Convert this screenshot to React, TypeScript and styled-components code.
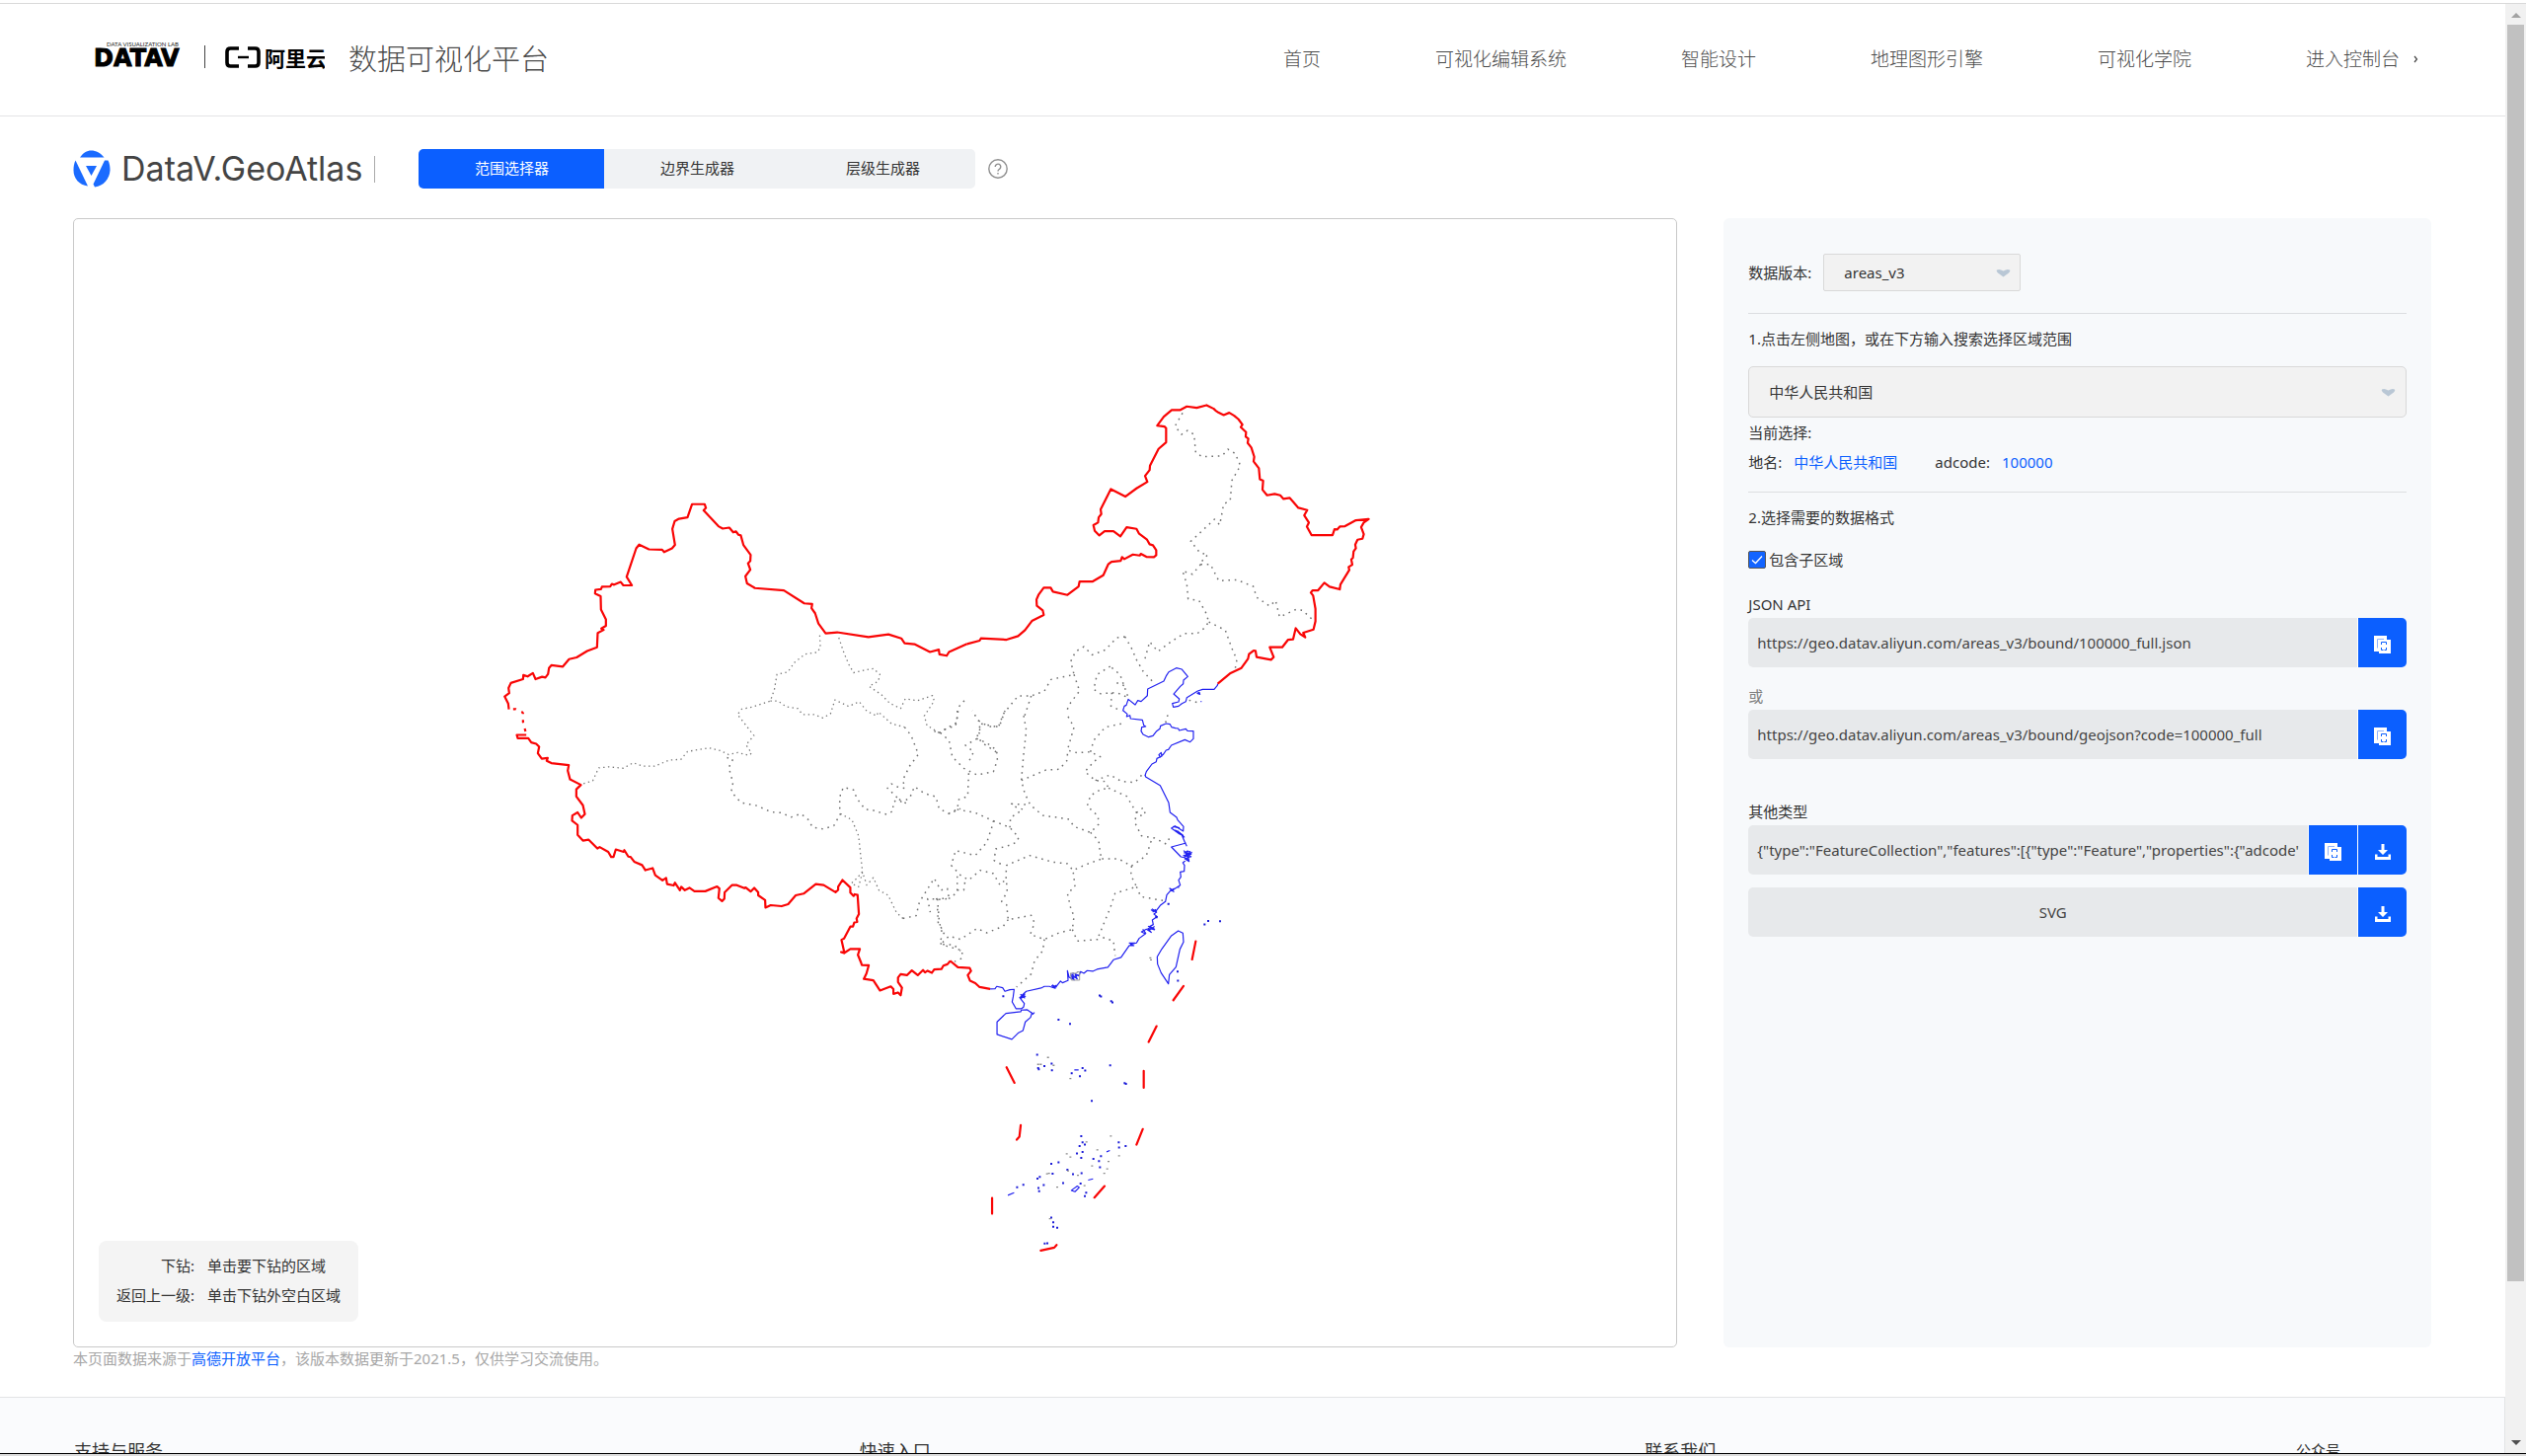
import React from 'react';
import styled, { createGlobalStyle } from 'styled-components';

const BLUE = '#0b5fff';
const FONT = '"Noto Sans", "Noto Sans CJK SC", sans-serif';

const Global = createGlobalStyle`
  *, *::before, *::after { box-sizing: border-box; }
  body { margin: 0; background: #fff; color: #333; font: 15px/30px ${FONT}; }
  button, input, select { font: inherit; color: inherit; }
  a { color: inherit; text-decoration: none; }
`;

const Screen = styled.div`
  display: flex;
  flex-direction: column;
  height: 100vh;
  padding-top: 3px;
  overflow: hidden;
`;

const Viewport = styled.div`
  display: flex;
  flex: 1;
  min-height: 0;
  border-top: 1px solid #d9d9d9;
`;

const Page = styled.div`
  flex: 1;
  min-width: 0;
  overflow: hidden;
`;

const BottomEdge = styled.div`
  height: 3px;
  flex: none;
  border-top: 1px solid #000;
  background: #dcdcdc;
`;

const Scrollbar = styled.div`
  display: flex;
  flex-direction: column;
  align-items: center;
  width: 21px;
  flex: none;
  background: #f1f1f1;
`;

const Arrow = styled.span<{ $down?: boolean }>`
  width: 0;
  height: 0;
  margin: ${(p) => (p.$down ? 'auto 0 8px' : '9px 0 7px')};
  border: 5px solid transparent;
  border-top: ${(p) => (p.$down ? '5px solid #505050' : '0')};
  border-bottom: ${(p) => (p.$down ? '0' : '5px solid #a3a3a3')};
`;

const Thumb = styled.div`
  width: 17px;
  height: calc(100% - 195px);
  background: #c1c1c1;
`;

const Header = styled.header`
  display: flex;
  align-items: center;
  justify-content: space-between;
  height: 114px;
  padding: 0 86px 2px 94px;
  border-bottom: 1px solid #e3e4e6;
`;

const Brand = styled.a`
  display: flex;
  align-items: center;
  color: #000;
`;

const BrandTitle = styled.span`
  margin-left: 24px;
  font-size: 29px;
  font-weight: 300;
  line-height: 36px;
  color: #4c4c4c;
`;

const Nav = styled.nav`
  display: flex;
  gap: 116px;
  font-size: 19px;
  font-weight: 300;
  color: #4a4a4a;
`;

const NavLink = styled.a`
  display: flex;
  align-items: center;
  gap: 13px;
`;

const Main = styled.main`
  padding: 33px 75px 28px 74px;
`;

const TitleBar = styled.div`
  display: flex;
  align-items: center;
  height: 40px;
  margin-bottom: 30px;
`;

const Product = styled.h1`
  display: flex;
  align-items: center;
  gap: 11px;
  margin: 0;
  font: 400 34px/38px Inter, sans-serif;
  color: #444;
`;

const Divider = styled.span`
  width: 1px;
  height: 27px;
  margin-left: 12px;
  background: #aaa;
`;

const Tabs = styled.div`
  display: flex;
  margin: 0 13px 0 44px;
  border-radius: 5px;
  overflow: hidden;
`;

const Tab = styled.button<{ $on?: boolean }>`
  width: 188px;
  height: 40px;
  padding: 0 0 2px;
  border: 0;
  background: ${(p) => (p.$on ? BLUE : '#f0f2f4')};
  color: ${(p) => (p.$on ? '#fff' : '#333')};
`;

const HelpButton = styled.button`
  display: flex;
  padding: 0;
  border: 0;
  background: none;
`;

const Columns = styled.div`
  display: grid;
  grid-template-columns: 68% 30%;
  justify-content: space-between;
`;

const MapPanel = styled.section`
  position: relative;
  display: flex;
  min-height: 1144px;
  border: 1px solid #c9c9c9;
  border-radius: 5px;
`;

const MapDrawing = styled.svg`
  width: 100%;
  height: 100%;
  fill: none;
  stroke-linejoin: round;
  path { vector-effect: non-scaling-stroke; }
`;

const Hint = styled.dl`
  position: absolute;
  left: 25px;
  bottom: 25px;
  display: grid;
  grid-template-columns: auto auto;
  column-gap: 13px;
  margin: 0;
  padding: 10px 18px 12px;
  border-radius: 8px;
  background: #f4f4f4;
  dt { text-align: right; }
  dd { margin: 0; }
`;

const Side = styled.aside`
  padding: 36px 25px;
  border-radius: 6px;
  background: #f7f9fb;
`;

const Inline = styled.div`
  display: flex;
  align-items: center;
  gap: 12px;
`;

const SelectBox = styled.div<{ $wide?: boolean }>`
  display: grid;
  align-items: center;
  width: ${(p) => (p.$wide ? '100%' : '200px')};
  > * { grid-area: 1 / 1; }
  svg {
    justify-self: end;
    margin-right: ${(p) => (p.$wide ? '11px' : '10px')};
    pointer-events: none;
  }
`;

const Select = styled.select<{ $tall?: boolean }>`
  appearance: none;
  width: 100%;
  height: ${(p) => (p.$tall ? '52px' : '38px')};
  padding: 0 20px;
  border: 1px solid #d9d9d9;
  border-radius: ${(p) => (p.$tall ? '5px' : '2px')};
  background: #f2f2f2;
`;

const Rule = styled.hr`
  height: 1px;
  margin: 22px 0 10px;
  border: 0;
  background: #dcdee1;
`;

const ShortRule = styled(Rule)`
  margin-top: 15px;
`;

const StepTitle = styled.label`
  display: block;
  margin-bottom: 13px;
`;

const Line = styled.div`
  display: flex;
  gap: 12px;
`;

const Value = styled.span`
  margin-right: 26px;
  color: ${BLUE};
`;

const Check = styled.label`
  display: flex;
  align-items: center;
  gap: 3px;
  margin-bottom: 16px;
`;

const CheckMark = styled.span`
  display: grid;
  width: 18px;
  height: 18px;
  > * { grid-area: 1 / 1; }
  svg { pointer-events: none; }
`;

const CheckInput = styled.input`
  appearance: none;
  margin: 0;
  width: 18px;
  height: 18px;
  border: 1px solid #555;
  border-radius: 2px;
  &:checked { background: #1264ff; }
`;

const FieldLabel = styled.label<{ $gap?: number; $muted?: boolean }>`
  display: block;
  margin-top: ${(p) => p.$gap || 0}px;
  line-height: 28px;
  color: ${(p) => (p.$muted ? '#808080' : 'inherit')};
`;

const FieldRow = styled.div<{ $gap?: number }>`
  display: flex;
  gap: 1px;
  margin-top: ${(p) => p.$gap || 0}px;
  border-radius: 5px;
  overflow: hidden;
  background: #fff;
`;

const Field = styled.input<{ $center?: boolean }>`
  flex: 1;
  min-width: 0;
  height: 50px;
  padding: 0 9px;
  border: 0;
  background: #e7e9eb;
  color: #444;
  text-align: ${(p) => (p.$center ? 'center' : 'left')};
`;

const IconButton = styled.button`
  display: flex;
  align-items: center;
  justify-content: center;
  width: 49px;
  height: 50px;
  padding: 4px 0 0;
  border: 0;
  background: ${BLUE};
`;

const Source = styled.p`
  margin: 0;
  line-height: 22px;
  color: #a6a6a6;
  a { color: ${BLUE}; }
`;

const Footer = styled.footer`
  display: grid;
  grid-template-columns: repeat(3, 1fr);
  padding: 39px 75px;
  border: 1px solid #e3e4e6;
  border-left: 0;
  background: #fafbfd;
`;

const FooterColumn = styled.div`
  display: flex;
  justify-content: space-between;
  padding-right: 91px;
`;

const FooterTitle = styled.h2`
  margin: 0;
  font: 400 18px/30px ${FONT};
`;

const FooterNote = styled.p`
  margin: 0;
  line-height: 28px;
`;

const DatavLogo = () => (
  <svg width="235" height="48" viewBox="0 0 235 48">
    <text x="14" y="11" fontSize="6" fontFamily="Lato, sans-serif" fill="#222">DATA VISUALIZATION LAB</text>
    <text x="1" y="31" fontSize="24" fontWeight="700" fontFamily="DejaVu Sans, sans-serif" stroke="#000" strokeWidth="1">DATAV</text>
    <path d="M113.500 10V33" stroke="#444" />
    <path d="M148 13h-8.500c-2.500 0-3.500 1-3.500 3.500v11c0 2.500 1 3.500 3.500 3.500h8.500M157 13h7.500c2.500 0 3.500 1 3.500 3.500v11c0 2.500-1 3.500-3.500 3.500H157" fill="none" stroke="#000" strokeWidth="3.600" />
    <path d="M147 22h11" stroke="#000" strokeWidth="2.400" />
    <text x="174" y="31" fontSize="21" fontWeight="700" fontFamily="Noto Sans CJK SC, sans-serif">阿里云</text>
  </svg>
);

const GeoLogo = () => (
  <svg width="38" height="38" viewBox="0 0 38 38" fill="#1b6bff">
    <path d="M7 7.500C10 3 14 .500 18.500 .500S28 3 31.500 7.500Z" />
    <path d="M2.500 10.500L15 36.500C6 35.500.500 28.500.500 20.500.500 16.500 1 13.500 2.500 10.500Z" />
    <path d="M32 10.500H35.500C37 13.500 37.500 16.500 37.500 20.500 37 29 31 36.500 22 37.500L20.500 34.500Z" />
    <path d="M13 16H24L18.500 26Z" />
  </svg>
);

const Caret = () => (
  <svg width="15" height="9" viewBox="0 0 15 9" fill="#b9c7d5">
    <path d="M1 1.500Q3.500 0 7.500 2.500Q11.500 0 14 1.500Q15 2.500 13 4.500L7.500 8.500L2 4.500Q0 2.500 1 1.500Z" />
  </svg>
);

const CopyIcon = () => (
  <svg width="17" height="18" viewBox="0 0 17 18">
    <path d="M0 0h13v4h4v14H5v-2H0z" fill="#fff" />
    <path d="M3.500 12.500V3.500H10" fill="none" stroke="#8fb4ff" />
    <path d="M7.500 9V6.500h5V9M7.500 12v2.500h2M12.500 12v2.500h-2" fill="none" stroke={BLUE} />
  </svg>
);

const DownloadIcon = () => (
  <svg width="16" height="16" viewBox="0 0 16 16" fill="#fff">
    <path d="M6.500 0h3v6H13l-5 5-5-5h3.500z" />
    <path d="M0 10.500h2.500V13h11v-2.500H16V16H0z" />
  </svg>
);

const B_NORTHWEST = 'M107 693L105 676 94 655 108 645 106 630 113 615 150 604 151 592 164 596 180 586 188 604 208 597 218 599 226 589 229 571 236 563 271 567 290 545 313 540 345 521 375 510 377 468 395 459 388 455 402 447 402 428 387 399 386 360 369 352 370 341 387 339 390 332 415 331 420 324 427 326 447 318 455 328 481 328 465 303 494 219 503 208 533 222 573 223 579 230 603 219 612 209 604 162 611 139 624 132 650 128 664 89 702 89 706 100 699 107 744 154 757 161 777 158 789 172 797 169 805 179 812 181 820 209 842 238 841 256 834 263 841 282 826 301 831 322 855 336 943 343 1005 381 1029 383 1027 395 1038 410 1048 440 1070 469 1105 466 1200 480 1261 472 1300 484 1310 498 1340 501 1387 524 1414 517 1416 531 1438 535 1445 524 1500 500';
const B_SOUTHWEST = 'M160 768L131 768 134 778 166 778 175 790 190 794 199 803 195 822 207 838 225 836 222 844 236 851 289 857 286 873 293 899 326 915 312 928 312 949 332 975 338 1001 327 1012 316 996 300 1005 299 1020 316 1033 316 1062 332 1079 349 1076 376 1102 383 1098 409 1112 418 1127 425 1127 432 1105 456 1112 458 1107 470 1126 477 1127 488 1141 512 1151 522 1166 544 1160 552 1181 574 1196 585 1189 588 1207 608 1211 612 1203 627 1225 631 1215 642 1225 656 1218 671 1228 704 1228 740 1214 747 1220 744 1248 755 1257 762 1250 763 1231 785 1210 800 1210 823 1219 827 1217 842 1229 853 1218 865 1231 865 1240 886 1254 887 1276 903 1269 936 1272 956 1266 979 1240 1003 1235 1040 1207 1064 1210 1100 1231 1108 1224 1108 1215 1121 1195 1145 1217 1145 1232 1155 1242 1158 1237 1167 1239 1171 1295 1164 1308 1166 1318 1157 1320 1153 1332 1145 1332 1126 1367 1118 1371 1126 1405 1117 1407 1126 1410 1145 1398 1174 1398 1168 1415 1178 1439 1180 1445 1201 1446 1194 1470 1186 1486 1215 1490 1235 1520 1268 1508 1276 1516 1276 1530 1290 1526 1298 1534 1302 1512 1290 1495 1290 1482 1298 1472 1317 1475 1332 1461 1350 1475 1366 1460 1372 1467 1380 1462 1393 1468 1400 1458 1422 1457 1428 1447 1440 1443 1449 1433';
const B_NORTHEAST = 'M0 787L38 777 42 770 120 774 155 763 176 745 197 717 233 699 230 685 212 671 211 652 217 638 233 616 254 616 261 628 305 638 339 612 342 597 382 597 414 578 429 545 439 537 467 534 471 523 478 529 504 515 525 518 528 513 545 522 568 523 575 517 575 502 565 487 555 484 547 470 523 452 515 437 485 432 466 460 445 444 418 444 402 457 388 443 384 426 398 418 400 402 408 392 406 378 437 316 481 339 515 314 548 294 541 276 555 258 556 245 582 194 605 174 605 131 600 126 578 123 598 96 622 76 647 76 668 65 698 69 728 61 750 72 755 77 765 84 780 91 797 84 812 93 825 104 837 120 832 128 848 143 847 157 855 163 853 176 864 190 873 218 871 232 887 253 890 286 900 291 898 318 912 335 935 331 952 335 962 346 981 343 1007 373 1034 380 1025 396 1039 418 1033 430 1047 456 1111 456 1117 438 1125 439 1133 430 1149 429 1182 411 1221 407 1206 418 1198 432 1206 453 1202 467 1187 470 1180 485 1182 496 1175 506 1173 525 1168 530 1171 546 1160 553 1162 562 1135 606 1133 621 1102 613 1086 601 1067 624 1050 624 1045 631 1052 640 1059 680 1059 718 1053 743 1022 753 1028 767 1013 757 999 739 991 773 976 774 958 797 920 797 932 827 924 835 880 827 877 808 871 807 857 818 854 832 834 860 799 877 762 908';
const B_SOUTH = 'M488 760L512 780 548 782 552 791 542 804 549 821 565 828 578 840 610 846';
const DASHES = 'M695 161L684 216M658 297L627 340M576 419L552 467M537 555V606M534 732L515 779M418 905L387 940M272 1084L265 1092 224 1101M76 941V989M163 720L159 755 151 764M120 544L144 591';

const COAST_NORTH = 'M762 908L761 913 751 925 716 925 701 930 668 950 665 962 653 968 643 976 627 979 624 968 643 963 645 954 628 939 648 916 657 908 658 897 671 886 653 864 636 860 613 872 606 883 598 900 549 924 548 944 529 962 519 959 511 972 490 955 484 973 478 976 474 989 487 1000 485 1008 495 1004 497 1014 533 1018 537 1034 543 1038 531 1040 529 1052 535 1062 552 1070 565 1066 575 1053 586 1045 588 1036 605 1029 617 1031 622 1040 633 1043 642 1044 645 1050 665 1045 670 1051 688 1052 688 1075 678 1085 662 1078 621 1095 612 1108 605 1110 597 1122 587 1131 583 1124 590 1117 592 1128 577 1135 575 1145 562 1152 545 1175 541 1187M700 937L708 940 706 934ZM710 962h3';
const COAST_EAST = 'M1081 195L1083 201 1127 227 1153 280 1157 309 1177 324 1180 332 1198 352 1197 366 1172 350 1161 357 1185 374 1197 380 1180 366 1200 384 1193 378 1202 400 1208 412M1206 402L1161 414 1190 444 1205 447M1212 425L1200 432 1222 435 1198 440 1218 444 1202 450 1215 458 1205 430 1218 428 1208 452 1196 462 1201 470 1200 488 1188 490 1190 505 1183 515 1188 530 1165 545 1156 540 1168 550 1160 545 1147 560 1143 580 1127 592 1115 608 1100 606 1116 612 1108 618 1118 626 1103 636 1106 650 1095 656 1110 664 1090 662 1100 674 1085 664 1070 672 1082 678 1063 692 1055 706 1037 710 1047 714 1033 714 1008 750 985 757 968 780 935 786 922 792 905 790 895 798 885 793 880 806 868 800 873 812 856 806 866 818 850 810 845 790 847 820 830 827 824 822 810 840 800 834 808 844 790 838 775 838 765 843 720 853 707 865 717 868 703 874 714 862 700 872 714 890 712 900 705 906 689 906 677 885 680 870 683 847 670 848 655 853 648 842 630 838 625 845 610 846';
/* Harbours and offshore islets packed against the shore. */
const COAST_DETAIL = 'M1198 425L1222 445M1200 445L1224 430M1204 436h18M1208 455l8 -6M1158 548l12 -8M1180 537h5M1102 602l14 10M1104 612l10 -8M1112 626h6M1090 655l20 12M1092 668l18 -12M1074 664l10 14M1032 706h20M856 800l20 16M858 814l20 -12M862 796v20M796 836l16 4M800 842l12 -8M702 862l14 12M704 874l12 -14M1172 362l24 16M1166 352l20 4M1150 587h4';
const ISLANDS = 'M642 129L656 136 658 163 647 185 635 239 615 262 612 290 590 257 579 230 578 208 592 184 620 145ZM118 380L163 375 165 370 183 369 197 379 193 392 177 406 170 432 155 440 136 459 91 444 91 406ZM194 376L200 382 205 377M317 918L335 905 341 909 328 922ZM124 933L143 925M326 552H339M424 801L434 797M368 887L383 883';

const BLUE_ISLETS = [733,99,722,110,769,100,640,253,641,281,403,326,407,329,438,343,442,347,278,399,313,412,110,328,612,47,576,88,213,506,216,546,235,540,257,533,258,553,218,550,351,546,359,554,318,562,343,571,435,538,479,592,483,594,379,646,347,753,351,772,342,783,358,779,351,801,334,806,347,819,461,772,462,788,482,783,407,814,401,829,404,848,384,822,278,833,256,837,260,867,221,877,214,882,171,901,152,909,233,902,217,911,219,921,292,896,305,855,322,869,348,866,345,897,362,925,358,936,256,1001,262,1015,262,1029,274,1032,236,1080,244,1079];
const GREY_ISLETS = [557,211,559,217,246,514,224,535,263,538,216,535,314,578,437,753,462,813,396,795,363,771,303,807,314,817,430,830,426,853,417,866,380,844,307,859,249,866,243,868,274,908,337,872,357,904,252,1004];

const toDots = (list: number[]) => {
  let d = '';
  for (let i = 0; i < list.length; i += 2) d += `M${list[i] - 3} ${list[i + 1]}h6`;
  return d;
};

const P_WEST = 'M1052 475L1054 510 1045 525 1008 530 975 555 955 583 922 590 914 635 902 668 850 685 815 692 802 708 820 730 852 770 828 797 845 822 836 828 803 820 775 826 752 815 715 806 650 817 630 840 595 842 550 860 515 860 485 850 455 866 410 862 380 865 362 903 328 913M902 668L925 668 950 685 985 690 1000 708 1035 708 1062 718 1085 705 1098 665 1140 684 1172 670 1195 698 1225 712 1230 700 1270 735 1310 745M1110 482L1125 525 1140 560 1155 585 1185 578 1215 573 1235 590 1230 610 1202 625 1240 650 1265 675 1298 690 1312 662 1350 667 1395 652 1400 668 1370 712 1378 740 1415 762M1115 1000L1150 1018 1170 1065 1175 1110 1182 1170 1165 1190 1148 1205 1170 1215 1182 1172 1195 1210 1215 1188 1232 1225 1260 1240 1285 1290 1305 1308';
const P_WEST_BOLD = 'M770 835L788 840 775 865 782 885 788 910 783 935 812 967 860 976 905 995 935 997 965 1010 995 1000 1018 1018 1030 1040 1062 1045 1095 1035 1115 1000 1112 975 1115 940 1125 922 1155 930 1165 955 1190 987 1215 990 1255 1002 1275 992 1275 968 1290 955 1305 965 1318 970M1310 745L1330 770 1352 825 1325 860 1305 900 1310 925 1285 920 1270 912 1258 925 1280 945 1300 965 1325 955 1340 920 1370 940 1405 950 1415 985 1445 1000 1480 985M1415 762L1440 748 1465 742 1475 685 1500 658M1305 1308L1345 1300 1355 1260 1400 1190 1420 1225 1440 1220 1445 1250 1415 1252 1380 1250 1388 1290M1410 1280L1412 1320 1430 1350 1415 1380 1440 1390 1485 1402 1485 1425 1462 1435';
const P_CENTRE = 'M440 62L460 68 485 90 495 140 530 175 570 195 620 185 632 150 630 120 600 98 570 85 580 60 575 30 555 0M510 0L510 35 475 55 455 68M575 30L605 48 638 48 655 0M570 85L535 105 560 125 545 155M545 190L542 260 515 270 510 300 485 312M510 300L565 310 620 335 615 355 600 400 565 440 505 425 492 470 520 500 545 515 580 485 620 495 640 530 655 515M620 335L670 355 697 385 690 400 660 412 627 420 622 455 650 470M670 355L672 325 710 300 680 290 675 283 732 286M712 15L720 60 712 130 705 212 715 250 732 286 770 318 850 330 865 352 915 370 940 345 938 320 905 290 915 258 945 240 970 235 960 215 930 212 898 185 925 155 945 140 915 125 875 128 845 120 865 50 840 5M705 212L780 180 820 178 845 150 845 120M915 125L925 90 960 50 1015 38M930 212L975 195 1010 215 1050 218 1078 188M970 235L1025 260 1055 310 1050 340 1070 380 1110 387 1145 405 1155 388M1055 310L1075 295 1082 315 1062 320M915 370L940 395 945 435 950 450 900 468 862 485 845 465 800 460 730 440 660 470 658 500 662 550 645 580 660 590 665 635 735 622 745 645 732 680 775 695 820 675 860 665 865 625 855 600 845 555 868 535 862 485M950 450L1000 450 1040 472 1085 440 1100 395M1040 472L1038 500 1055 535 990 555 975 600 940 685 985 700 990 745M1055 535L1068 565 1140 578M860 665L875 700 940 695 940 685M665 635L650 655 600 675 570 662 520 695 485 685 460 710 500 712 520 730M775 695L770 730 745 760 735 800 690 840M450 572L455 640 465 680M445 572L490 570 510 550 510 500M510 545L530 545 535 510';
const P_NORTH = 'M655 85L632 125 652 150 670 138 690 150 695 205 715 218 775 215 793 195 815 208 831 245 805 290 800 350 780 362 768 425 752 408 680 475 708 510 732 515 710 540M710 545L740 545 765 595 820 592 870 612 880 645 920 672 938 655 950 705 1000 682 1020 685 1052 715M710 545L685 575 655 565 668 605 672 650 705 655 725 690 735 720 720 740 700 755 660 755 620 780 580 810 555 780 540 835M735 720L785 745 805 800 820 835 815 862M480 765L455 768 420 805 380 820 355 795 330 810 315 840 325 880 255 895 235 930 195 945 155 945 110 1000 95 1040 45 1030 30 1070 50 1090 95 1120M480 765L500 800 515 835 535 870 570 908M325 880L342 930 315 965 300 995M435 855L395 880 385 925 405 938 455 935 490 950 465 880 435 855M440 935L437 975 470 992M455 905L480 915M195 945L175 1005M610 1003L603 1028M675 958L700 965';

/* Each tile of the outline is digitised on its own local grid. */
const WEST = 'translate(480 480) scale(.33333 .34439)';
const NORTH = 'translate(980 390) scale(.33333)';
const CENTRE = 'translate(800 720) scale(.33333)';
const SOUTH = 'translate(980 900) scale(.33333)';

const ChinaMap = () => (
  <MapDrawing viewBox="0 0 1623 1142" role="img" aria-label="中华人民共和国">
    <g transform="translate(-75 -222)">
      <path transform={WEST} d={P_WEST} stroke="#787878" strokeWidth="1.300" strokeDasharray="1.400 3.400" />
      <g stroke="#707070" strokeWidth="1.500" strokeDasharray="1.600 4.800">
        <path transform={WEST} d={P_WEST_BOLD} />
        <path transform={CENTRE} d={P_CENTRE} />
        <path transform={NORTH} d={P_NORTH} />
      </g>
      <g stroke="#2222f0" strokeWidth="1.200">
        <path transform={NORTH} d={COAST_NORTH} />
        <path transform={CENTRE} d={COAST_EAST} />
        <path transform={CENTRE} d={COAST_DETAIL} />
        <path transform={SOUTH} d={ISLANDS} />
      </g>
      <path transform={SOUTH} d={toDots(BLUE_ISLETS)} stroke="#1c1cd8" strokeWidth="2" />
      <path transform={SOUTH} d={toDots(GREY_ISLETS)} stroke="#8a8a8a" strokeWidth="1.300" />
      <path transform={SOUTH} d="M314 258h20v-4h8v25h-25z" stroke="#999" />
      <g stroke="#f90505" strokeWidth="2.200">
        <path transform={WEST} d={B_NORTHWEST} />
        <path transform={WEST} d={B_SOUTHWEST} />
        <path transform={WEST} d="M120 692L128 692 146 700 150 704 150 730 156 752 160 768" strokeDasharray="3 6" />
        <path transform={NORTH} d={B_NORTHEAST} />
        <path transform={CENTRE} d={B_SOUTH} />
        <path transform={SOUTH} d={DASHES} strokeLinecap="round" />
      </g>
    </g>
  </MapDrawing>
);

const NAV = ['首页', '可视化编辑系统', '智能设计', '地理图形引擎', '可视化学院'];

export default function App() {
  return (
    <Screen>
      <Global />
      <Viewport>
        <Page>
          <Header>
            <Brand href="#">
              <DatavLogo />
              <BrandTitle>数据可视化平台</BrandTitle>
            </Brand>
            <Nav>
              {NAV.map((item) => (
                <NavLink href="#" key={item}>{item}</NavLink>
              ))}
              <NavLink href="#">
                进入控制台
                <svg width="8" height="10" viewBox="0 0 8 10" fill="none" stroke="#444" strokeWidth="1.200">
                  <path d="M2 2L4.500 5L2 8" />
                </svg>
              </NavLink>
            </Nav>
          </Header>
          <Main>
            <TitleBar>
              <Product><GeoLogo />DataV.GeoAtlas</Product>
              <Divider />
              <Tabs>
                <Tab $on>范围选择器</Tab>
                <Tab>边界生成器</Tab>
                <Tab>层级生成器</Tab>
              </Tabs>
              <HelpButton aria-label="帮助">
                <svg width="20" height="20" viewBox="0 0 20 20" fill="none" stroke="#8f8f8f" strokeWidth="1.400">
                  <circle cx="10" cy="10" r="9.200" />
                  <path d="M7.200 8a2.800 2.800 0 1 1 4.300 2.300c-1 .700-1.500 1.100-1.500 2.200M10 14v1.600" />
                </svg>
              </HelpButton>
            </TitleBar>
            <Columns>
              <MapPanel>
                <ChinaMap />
                <Hint>
                  <dt>下钻:</dt>
                  <dd>单击要下钻的区域</dd>
                  <dt>返回上一级:</dt>
                  <dd>单击下钻外空白区域</dd>
                </Hint>
              </MapPanel>
              <Side>
                <Inline>
                  <label htmlFor="version">数据版本:</label>
                  <SelectBox>
                    <Select id="version"><option>areas_v3</option></Select>
                    <Caret />
                  </SelectBox>
                </Inline>
                <Rule />
                <StepTitle htmlFor="area">1.点击左侧地图，或在下方输入搜索选择区域范围</StepTitle>
                <SelectBox $wide>
                  <Select id="area" $tall><option>中华人民共和国</option></Select>
                  <Caret />
                </SelectBox>
                <Line>当前选择:</Line>
                <Line>
                  地名: <Value>中华人民共和国</Value>
                  adcode: <Value>100000</Value>
                </Line>
                <ShortRule />
                <StepTitle as="div">2.选择需要的数据格式</StepTitle>
                <Check>
                  <CheckMark>
                    <CheckInput type="checkbox" defaultChecked />
                    <svg width="18" height="18" viewBox="0 0 18 18" fill="none" stroke="#fff" strokeWidth="1.300">
                      <path d="M4 9.500L7.500 12.500L14 5.500" />
                    </svg>
                  </CheckMark>
                  包含子区域
                </Check>
                <FieldLabel htmlFor="json">JSON API</FieldLabel>
                <FieldRow>
                  <Field id="json" readOnly value="https://geo.datav.aliyun.com/areas_v3/bound/100000_full.json" />
                  <IconButton aria-label="复制"><CopyIcon /></IconButton>
                </FieldRow>
                <FieldLabel htmlFor="geojson" $gap={15} $muted>或</FieldLabel>
                <FieldRow>
                  <Field id="geojson" readOnly value="https://geo.datav.aliyun.com/areas_v3/bound/geojson?code=100000_full" />
                  <IconButton aria-label="复制"><CopyIcon /></IconButton>
                </FieldRow>
                <FieldLabel htmlFor="other" $gap={39}>其他类型</FieldLabel>
                <FieldRow>
                  <Field id="other" readOnly value={'{"type":"FeatureCollection","features":[{"type":"Feature","properties":{"adcode":110000'} />
                  <IconButton aria-label="复制"><CopyIcon /></IconButton>
                  <IconButton aria-label="下载"><DownloadIcon /></IconButton>
                </FieldRow>
                <FieldRow $gap={13}>
                  <Field aria-label="SVG" readOnly $center value="SVG" />
                  <IconButton aria-label="下载"><DownloadIcon /></IconButton>
                </FieldRow>
              </Side>
            </Columns>
            <Source>
              本页面数据来源于<a href="#">高德开放平台</a>，该版本数据更新于2021.5，仅供学习交流使用。
            </Source>
          </Main>
          <Footer>
            <FooterColumn><FooterTitle>支持与服务</FooterTitle></FooterColumn>
            <FooterColumn><FooterTitle>快速入口</FooterTitle></FooterColumn>
            <FooterColumn>
              <FooterTitle>联系我们</FooterTitle>
              <FooterNote>公众号</FooterNote>
            </FooterColumn>
          </Footer>
        </Page>
        <Scrollbar aria-hidden="true">
          <Arrow />
          <Thumb />
          <Arrow $down />
        </Scrollbar>
      </Viewport>
      <BottomEdge />
    </Screen>
  );
}
